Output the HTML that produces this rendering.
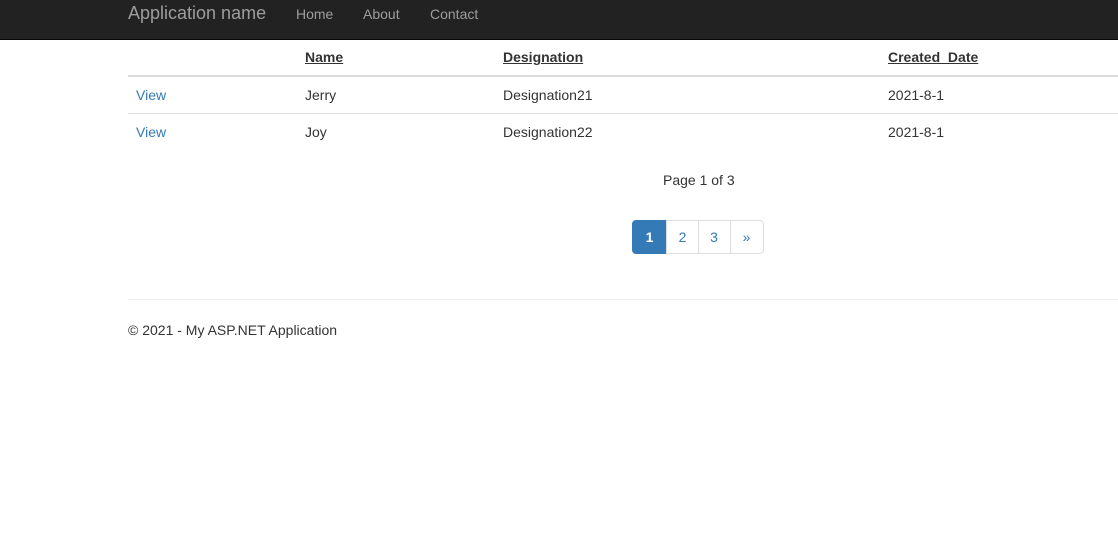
<!DOCTYPE html>
<html><head><style>
body{margin:0;font-family:"Liberation Sans",sans-serif;font-size:14px;color:#333;background:#fff;width:1118px;height:559px;overflow:hidden;position:relative}
.nav{position:absolute;left:0;top:0;width:1118px;height:39px;background:#222;border-bottom:1px solid #080808}
.nav span{position:absolute;color:#9d9d9d;top:6px;font-size:14px}
.nav .brand{font-size:18px;top:3px;left:128px}
.t{position:absolute;white-space:nowrap}
.hl{position:absolute;left:128px;width:990px;background:#ddd}
.pg{position:absolute;top:220px;height:32px;border:1px solid #ddd;color:#337ab7;text-align:center;line-height:32px;box-sizing:content-box}
</style></head><body>
<div class="nav"><span class="brand">Application name</span><span style="left:296px">Home</span><span style="left:363px">About</span><span style="left:430px">Contact</span></div>
<div class="t" style="left:305px;top:49px;font-weight:bold;text-decoration:underline">Name</div>
<div class="t" style="left:503px;top:49px;font-weight:bold;text-decoration:underline">Designation</div>
<div class="t" style="left:888px;top:49px;font-weight:bold;text-decoration:underline">Created_Date</div>
<div class="hl" style="top:75px;height:2px"></div>
<div class="t" style="left:136px;top:87px;color:#337ab7">View</div>
<div class="t" style="left:305px;top:87px">Jerry</div>
<div class="t" style="left:503px;top:87px">Designation21</div>
<div class="t" style="left:888px;top:87px">2021-8-1</div>
<div class="hl" style="top:113px;height:1px"></div>
<div class="t" style="left:136px;top:124px;color:#337ab7">View</div>
<div class="t" style="left:305px;top:124px">Joy</div>
<div class="t" style="left:503px;top:124px">Designation22</div>
<div class="t" style="left:888px;top:124px">2021-8-1</div>
<div class="t" style="left:663px;top:172px">Page 1 of 3</div>
<div class="pg" style="left:632px;width:33px;background:#337ab7;border-color:#337ab7;color:#fff;font-weight:bold;border-radius:4px 0 0 4px">1</div>
<div class="pg" style="left:666px;width:31px">2</div>
<div class="pg" style="left:698px;width:32px;border-left:none">3</div>
<div class="pg" style="left:730px;width:33px;border-left:none;border-radius:0 4px 4px 0">»</div>
<div class="hl" style="top:299px;height:1px;background:#eee"></div>
<div class="t" style="left:128px;top:322px">© 2021 - My ASP.NET Application</div>
</body></html>
